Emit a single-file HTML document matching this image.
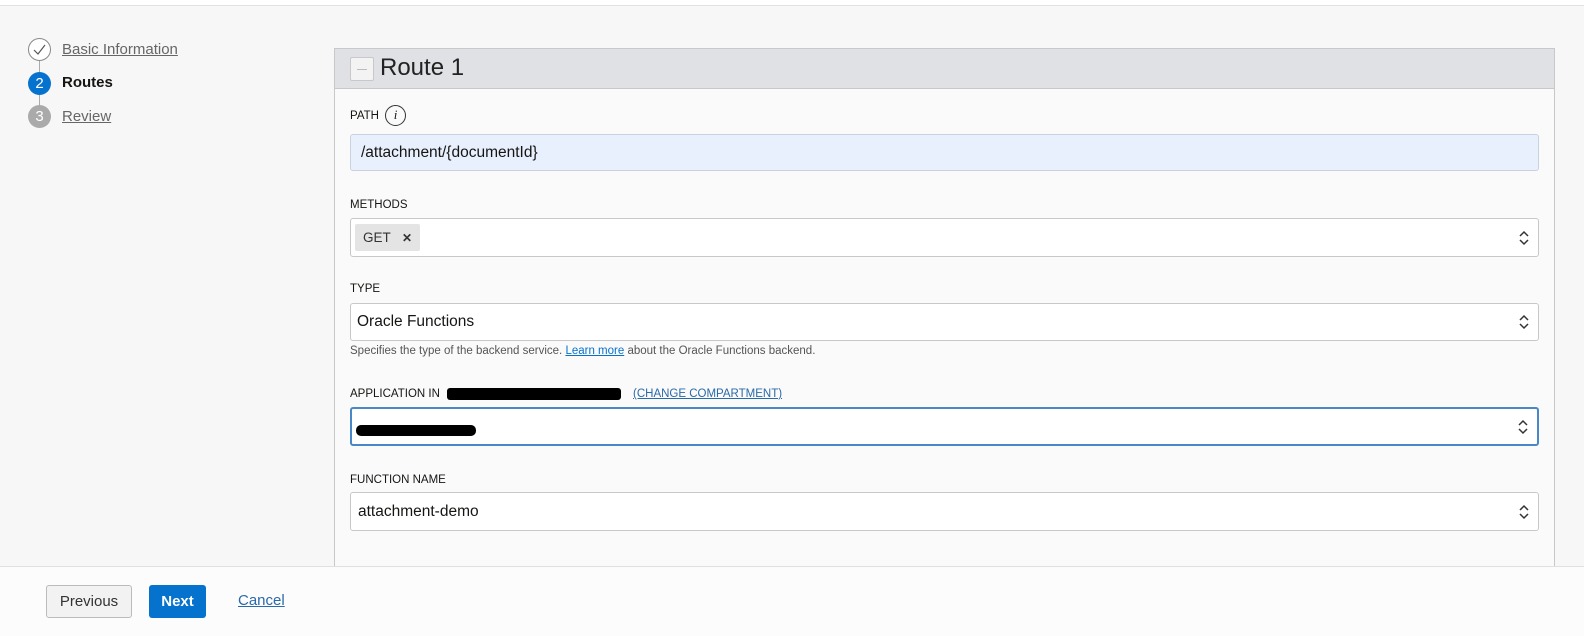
<!DOCTYPE html>
<html><head><style>
*{box-sizing:border-box;margin:0;padding:0}
body{width:1584px;height:636px;overflow:hidden;background:#f7f7f7;font-family:"Liberation Sans",Arial,sans-serif;position:relative;color:#161513}
.abs{position:absolute}
.top{left:0;top:0;width:1584px;height:6px;background:#fff;border-bottom:1px solid #e2e2e2}
.step{left:28px;width:23px;height:23px;border-radius:50%;font-size:15px;color:#fff;text-align:center;line-height:23px}
.lbl{font-size:11.5px;color:#161513;left:350px}
.inp{left:350px;width:1189px;border:1px solid #c8c8c8;border-radius:3px;background:#fff;font-size:15.5px;padding-left:10px;display:flex;align-items:center}
.arr{position:absolute;right:8px;top:50%;margin-top:-8px}
</style></head><body>
<div class="abs top"></div>
<div class="abs" style="left:39px;top:60px;width:1px;height:50px;background:#aaa"></div>
<div class="abs step" style="top:38px;background:#fff;border:1px solid #888"><svg width="21" height="21" viewBox="0 0 21 21" style="position:absolute;left:0;top:0"><path d="M5 11 L9 15 L16 6" fill="none" stroke="#555" stroke-width="1.2"/></svg></div>
<div class="abs step" style="top:72px;background:#0572ce">2</div>
<div class="abs step" style="top:105px;background:#aaa">3</div>
<div class="abs" style="left:62px;top:41px;font-size:15px;color:#666;text-decoration:underline">Basic Information</div>
<div class="abs" style="left:62px;top:74px;font-size:15px;font-weight:bold">Routes</div>
<div class="abs" style="left:62px;top:108px;font-size:15px;color:#666;text-decoration:underline">Review</div>

<div class="abs" style="left:334px;top:48px;width:1221px;height:530px;border:1px solid #c8c8c8;background:#fafafa"></div>
<div class="abs" style="left:334px;top:48px;width:1221px;height:41px;background:#dfe1e4;border:1px solid #c8c8c8"></div>
<div class="abs" style="left:350px;top:57px;width:24px;height:24px;background:#f3f3f3;border:1px solid #c8c8c8;border-radius:2px"><div style="position:absolute;left:6px;top:11px;width:10px;height:1px;background:#bbb"></div></div>
<div class="abs" style="left:380px;top:54px;font-size:24px;color:#222">Route 1</div>

<div class="abs lbl" style="top:110px">PATH</div>
<div class="abs" style="left:385px;top:105px;width:21px;height:21px;border:1.5px solid #333;border-radius:50%;text-align:center;font:italic 13px/18px 'Liberation Serif',serif">i</div>
<div class="abs inp" style="top:134px;height:37px;background:#e8f0fd;border-color:#c9d2df">/attachment/{documentId}</div>

<div class="abs lbl" style="top:199px">METHODS</div>
<div class="abs inp" style="top:218px;height:39px;padding-left:4px"><span style="background:#e4e4e4;font-size:13.5px;color:#333;padding:6px 8px 6px 8px;border-radius:2px">GET&nbsp;&nbsp;&nbsp;<b style="font-size:12px">✕</b></span><svg class="arr" width="12" height="16"><path d="M2 6 L6 2 L10 6 M2 10 L6 14 L10 10" fill="none" stroke="#333" stroke-width="1.5"/></svg></div>

<div class="abs lbl" style="top:283px">TYPE</div>
<div class="abs inp" style="top:303px;height:38px;padding-left:6px">Oracle Functions<svg class="arr" width="12" height="16"><path d="M2 6 L6 2 L10 6 M2 10 L6 14 L10 10" fill="none" stroke="#333" stroke-width="1.5"/></svg></div>
<div class="abs" style="left:350px;top:345px;font-size:11.5px;color:#555">Specifies the type of the backend service. <span style="color:#0572ce;text-decoration:underline">Learn more</span> about the Oracle Functions backend.</div>

<div class="abs lbl" style="top:388px">APPLICATION IN</div>
<div class="abs" style="left:447px;top:388px;width:174px;height:12px;background:#000;border-radius:3px"></div>
<div class="abs" style="left:633px;top:388px;font-size:11.5px;color:#2a6aa8;text-decoration:underline">(CHANGE COMPARTMENT)</div>
<div class="abs inp" style="top:407px;height:39px;border:2px solid #4a87c8"><svg class="arr" width="12" height="16"><path d="M2 6 L6 2 L10 6 M2 10 L6 14 L10 10" fill="none" stroke="#333" stroke-width="1.5"/></svg></div>
<div class="abs" style="left:356px;top:425px;width:120px;height:11px;background:#000;border-radius:5px"></div>

<div class="abs lbl" style="top:474px">FUNCTION NAME</div>
<div class="abs inp" style="top:492px;height:39px;padding-left:7px">attachment-demo<svg class="arr" width="12" height="16"><path d="M2 6 L6 2 L10 6 M2 10 L6 14 L10 10" fill="none" stroke="#333" stroke-width="1.5"/></svg></div>

<div class="abs" style="left:0;top:566px;width:1584px;height:70px;background:#fcfcfc;border-top:1px solid #e0e0e0"></div>
<div class="abs" style="left:46px;top:585px;width:86px;height:33px;border:1px solid #bbb;border-radius:3px;background:#f2f2f2;font-size:15px;color:#333;text-align:center;line-height:31px">Previous</div>
<div class="abs" style="left:149px;top:585px;width:57px;height:33px;border-radius:3px;background:#0572ce;font-size:15px;font-weight:bold;color:#fff;text-align:center;line-height:33px">Next</div>
<div class="abs" style="left:238px;top:592px;font-size:15px;color:#2a6aa8;text-decoration:underline">Cancel</div>
</body></html>
